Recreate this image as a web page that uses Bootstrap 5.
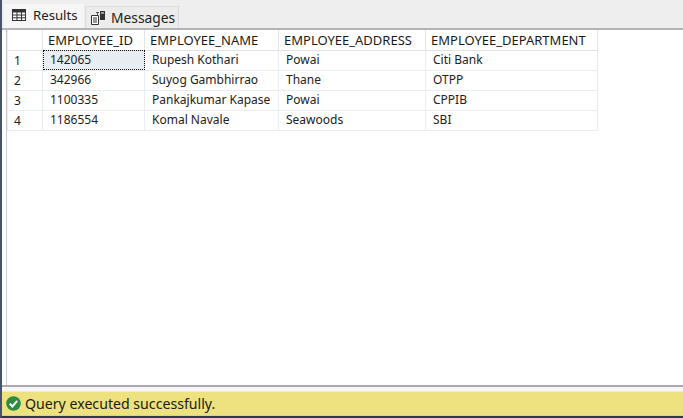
<!DOCTYPE html>
<html lang="en">
<head>
<meta charset="utf-8">
<title>Results</title>
<link rel="stylesheet" href="https://cdn.jsdelivr.net/npm/bootstrap@5.3.0/dist/css/bootstrap.min.css">
<style>
html,body{height:100%;margin:0;overflow:hidden}
body{font-family:"Noto Sans","Open Sans","Liberation Sans",sans-serif;font-size:12px;color:#1a1a1a;background:#fff}
.shell{height:418px;border-left:2px solid #44546a;border-bottom:2px solid #2b3a4d}
.tabstrip{height:30px;background:#eeeeee;border-bottom:2px solid #b4b4b4;padding-left:2px;align-items:flex-end}
.tabitem{line-height:18px;display:flex;align-items:center}
.tab-on{background:#f6f6f6;width:80px;height:24px;padding-left:8px;gap:7px;color:#222;font-size:13.2px;padding-bottom:2px}
.tab-off{background:#ececec;border:1px solid #dcdcdc;border-bottom:0;width:94px;height:22px;padding-left:4px;gap:5px;color:#222;margin-left:1px;font-size:13.8px}
.gridarea{padding-left:4px;height:357px;border-bottom:2px solid #a9a9b0}
.gridbox{border-left:1px solid #c9c9d0;height:100%}
.datagrid{table-layout:fixed;width:590px;border-collapse:collapse;margin:0}
.datagrid th,.datagrid td{font-weight:400;height:20px;padding:0;border:1px solid #e8edf1;border-top:0;line-height:18px;white-space:nowrap;overflow:hidden;vertical-align:middle}
.datagrid th{padding-left:5px;color:#1a1a1a;border-right-color:#e3e3e3;border-bottom-color:#e3e3e3;font-size:13px}
.datagrid td{padding-left:7px;color:#222}
.datagrid td.rownum{padding-left:6px;padding-top:2px;line-height:16px}
.datagrid td.cellsel{background:#e8edf2;outline:1px dotted #111;outline-offset:-1px}
.gapstrip{height:4px;background:#f7f5f7}
.statusline{height:25px;background:#ede27f;border-top:1px solid #f1ead0;border-bottom:1px solid #d6d29a;padding-left:4px;gap:4px;font-size:14.15px;color:#1c1c10}
</style>
</head>
<body>
<div class="shell d-flex flex-column">
  <div class="tabstrip d-flex">
    <div class="tabitem tab-on">
      <svg width="14" height="12" viewBox="0 0 14 12"><rect x=".5" y=".5" width="13" height="11" fill="#fff" stroke="#333"/><rect x=".5" y=".5" width="13" height="3" fill="#333"/><path d="M5 1v10M9.500 1v10M1 6h12M1 8.800h12" stroke="#333" fill="none"/></svg>
      <span>Results</span>
    </div>
    <div class="tabitem tab-off">
      <svg width="16" height="15" viewBox="0 0 16 15"><path d="M1.500 5.500h7v9h-7z" fill="#fff" stroke="#333"/><path d="M3 8h4M3 10h4M3 12h4" stroke="#333"/><path d="M6 2.500h3M7.500 3v2" stroke="#555" fill="none"/><rect x="10" y="1" width="5" height="9" fill="#333"/><path d="M11 3h3" stroke="#fff"/></svg>
      <span>Messages</span>
    </div>
  </div>
  <div class="gridarea">
    <div class="gridbox">
      <table class="datagrid table-borderless">
        <colgroup><col style="width:35px"><col style="width:102px"><col style="width:134px"><col style="width:147px"><col style="width:172px"></colgroup>
        <thead><tr><th></th><th>EMPLOYEE_ID</th><th>EMPLOYEE_NAME</th><th>EMPLOYEE_ADDRESS</th><th>EMPLOYEE_DEPARTMENT</th></tr></thead>
        <tbody>
          <tr><td class="rownum">1</td><td class="cellsel">142065</td><td>Rupesh Kothari</td><td>Powai</td><td>Citi Bank</td></tr>
          <tr><td class="rownum">2</td><td>342966</td><td>Suyog Gambhirrao</td><td>Thane</td><td>OTPP</td></tr>
          <tr><td class="rownum">3</td><td>1100335</td><td>Pankajkumar Kapase</td><td>Powai</td><td>CPPIB</td></tr>
          <tr><td class="rownum">4</td><td>1186554</td><td>Komal Navale</td><td>Seawoods</td><td>SBI</td></tr>
        </tbody>
      </table>
    </div>
  </div>
  <div class="gapstrip"></div>
  <div class="statusline d-flex align-items-center">
    <svg width="15" height="15" viewBox="0 0 15 15"><circle cx="7.500" cy="7.500" r="7.300" fill="#2e8b45"/><path d="M3.800 7.800l2.600 2.700 4.800-5.600" stroke="#fff" stroke-width="2" fill="none"/></svg>
    <span>Query executed successfully.</span>
  </div>
</div>
</body>
</html>
